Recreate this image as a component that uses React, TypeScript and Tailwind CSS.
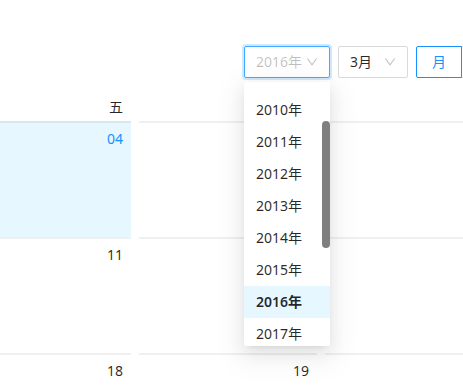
import React from "react";

const Chevron = () => (
  <svg viewBox="64 64 896 896" width="12" height="12" fill="currentColor" className="text-black/25">
    <path d="M884 256h-75c-5.1 0-9.9 2.5-12.9 6.6L512 654.2 227.9 262.6c-3-4.1-7.8-6.6-12.9-6.6h-75c-6.5 0-10.3 7.4-6.5 12.2l352.6 486.1c12.8 17.6 39 17.6 51.7 0l352.6-486.1c3.9-4.8.1-12.2-6.4-12.2z" />
  </svg>
);

const weeks = [
  ["04", "05", "06"],
  ["11", "12", "13"],
  ["18", "19", "20"],
];

export default function App() {
  const years = [2009, 2010, 2011, 2012, 2013, 2014, 2015, 2016, 2017];
  return (
    <div
      className="relative w-[463px] h-[387px] overflow-hidden bg-white text-[14px] text-black/[0.85]"
      style={{ fontFamily: '"Noto Sans", "Noto Sans CJK SC", sans-serif' }}
    >
      <div className="ml-[-51px] pt-[34px]">
        {/* header */}
        <div className="w-[558px] flex justify-end py-3">
          <div className="w-[86px] h-8 px-[11px] flex items-center justify-between border border-[#40a9ff] rounded-[2px] shadow-[0_0_0_2px_rgba(24,144,255,0.2)]">
            <span className="text-black/25 leading-[22px]">2016年</span>
            <Chevron />
          </div>
          <div className="ml-2 w-[70px] h-8 px-[11px] flex items-center justify-between border border-[#d9d9d9] rounded-[2px]">
            <span className="leading-[22px]">3月</span>
            <Chevron />
          </div>
          <div className="ml-2 flex h-8">
            <div className="px-[15px] leading-[30px] border border-[#1890ff] text-[#1890ff] rounded-l-[2px]">月</div>
            <div className="px-[15px] leading-[30px] border border-l-0 border-[#d9d9d9] rounded-r-[2px]">年</div>
          </div>
        </div>
        {/* body */}
        <div className="w-[558px] pt-2">
          <div className="flex">
            {["五", "六", "日"].map((d) => (
              <div key={d} className="w-[186px] text-right pr-3 pb-[5px] leading-[18px]">
                {d}
              </div>
            ))}
          </div>
          {weeks.map((row, ri) => (
            <div key={ri} className="flex">
              {row.map((v, ci) => {
                const sel = ri === 0 && ci === 0;
                return (
                  <div key={v} className="w-[186px] px-1">
                    <div
                      className={
                        "border-t-2 border-black/[0.06] pt-1 px-2 " + (sel ? "bg-[#e6f7ff]" : "bg-white")
                      }
                    >
                      <div className={"text-right leading-6 " + (sel ? "text-[#1890ff]" : "")}>{v}</div>
                      <div className="h-[86px]" />
                    </div>
                  </div>
                );
              })}
            </div>
          ))}
        </div>
      </div>

      {/* dropdown */}
      <div className="absolute left-[244px] top-[82px] w-[86px] py-1 bg-white rounded-[2px] shadow-[0_3px_6px_-4px_rgba(0,0,0,0.12),0_6px_16px_0_rgba(0,0,0,0.08),0_9px_28px_8px_rgba(0,0,0,0.05)]">
        <div className="relative h-[256px] overflow-hidden">
          <div className="mt-[-24px]">
            {years.map((y) => (
              <div
                key={y}
                className={
                  "h-8 px-3 py-[5px] leading-[22px] " + (y === 2016 ? "bg-[#e6f7ff] font-semibold" : "")
                }
              >
                {y}年
              </div>
            ))}
          </div>
          <div className="absolute right-0 top-[35px] w-2 h-[127px] rounded-full bg-black/50" />
        </div>
      </div>
    </div>
  );
}
